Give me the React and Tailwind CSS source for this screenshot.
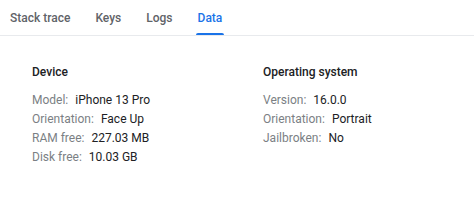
const tabs = ['Stack trace', 'Keys', 'Logs', 'Data'];

const Row = ({ label, value }) => (
  <div className="flex h-[19px] items-center">
    <span className="text-[#7b7f84]">{label}</span>
    <span className="ml-[7px] text-[#202124]">{value}</span>
  </div>
);

const Section = ({ title, rows }) => (
  <div>
    <div className="h-[18px] text-[12px] font-medium text-[#202124] leading-[18px]">{title}</div>
    <div className="mt-[9px] text-[12px]">
      {rows.map(([label, value]) => (
        <Row key={label} label={label} value={value} />
      ))}
    </div>
  </div>
);

export default function App() {
  return (
    <div className="h-[203px] w-[474px] bg-white font-['Roboto',sans-serif]">
      <div className="flex h-[36px] border-b border-[#e8eaed] pl-[10px]">
        {tabs.map((tab) => (
          <div
            key={tab}
            className={`relative mr-[25px] flex items-center text-[12px] font-medium ${
              tab === 'Data' ? 'text-[#1a73e8]' : 'text-[#5f6368]'
            }`}
          >
            {tab}
            {tab === 'Data' && (
              <span className="absolute bottom-0 left-[-2px] right-[-2px] h-[2px] rounded-t bg-[#1a73e8]" />
            )}
          </div>
        ))}
      </div>
      <div className="grid grid-cols-[231px_1fr] pl-[32px] pt-[27px]">
        <Section
          title="Device"
          rows={[
            ['Model:', 'iPhone 13 Pro'],
            ['Orientation:', 'Face Up'],
            ['RAM free:', '227.03 MB'],
            ['Disk free:', '10.03 GB'],
          ]}
        />
        <Section
          title="Operating system"
          rows={[
            ['Version:', '16.0.0'],
            ['Orientation:', 'Portrait'],
            ['Jailbroken:', 'No'],
          ]}
        />
      </div>
    </div>
  );
}
